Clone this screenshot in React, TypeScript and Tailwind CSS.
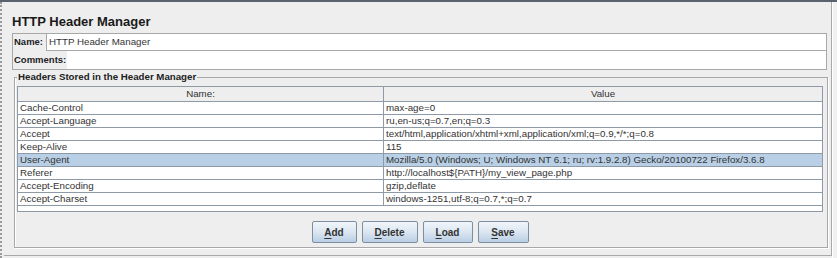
/**
 * JMeter-style HTTP Header Manager panel.
 */

const headers: [string, string][] = [
  ['Cache-Control', 'max-age=0'],
  ['Accept-Language', 'ru,en-us;q=0.7,en;q=0.3'],
  ['Accept', 'text/html,application/xhtml+xml,application/xml;q=0.9,*/*;q=0.8'],
  ['Keep-Alive', '115'],
  ['User-Agent', 'Mozilla/5.0 (Windows; U; Windows NT 6.1; ru; rv:1.9.2.8) Gecko/20100722 Firefox/3.6.8'],
  ['Referer', 'http://localhost${PATH}/my_view_page.php'],
  ['Accept-Encoding', 'gzip,deflate'],
  ['Accept-Charset', 'windows-1251,utf-8;q=0.7,*;q=0.7'],
];

const SELECTED = 4;

function ActionButton({ label, width }: { label: string; width: string }): React.ReactElement {
  return (
    <button
      type="button"
      className={`h-[22px] ${width} rounded-[2px] border border-[#7d8fa3] bg-linear-to-b from-[#f1f5fa] via-[#dbe6f1] to-[#b9cee4] text-[10px] font-bold text-[#333]`}
    >
      <span className="underline underline-offset-[2px]">{label[0]}</span>
      {label.slice(1)}
    </button>
  );
}

export default function App(): React.ReactElement {
  return (
    <div className="flex h-[258px] w-[837px] overflow-hidden border-t-2 border-[#59626d] bg-[#eeeeee] font-['Liberation_Sans',Arial,sans-serif] text-[#333]">
      <div className="w-[4px] border-l-2 border-dotted border-[#9a9a9a]" />

      <div className="flex h-[254px] w-[828px] flex-col border-r border-b border-[#a9a9a9] pl-[8px]">
        <h1 className="mt-[12px] h-[16px] text-[13px] leading-[16px] font-bold text-[#1a1a1a]">
          HTTP Header Manager
        </h1>

        {/* name / comments */}
        <div className="mt-[3px] flex w-[815px] flex-col border border-[#a8a8a8] bg-[#eeeeee]">
          <div className="flex h-[17px] items-center">
            <span className="w-[33px] pl-[1px] text-[9.5px] font-bold text-[#222]">Name:</span>
            <div className="flex h-full flex-1 items-center border-b border-l border-[#a8a8a8] bg-white pl-[2px] text-[9.75px] text-[#333]">
              HTTP Header Manager
            </div>
          </div>
          <div className="flex h-[18px] items-center">
            <span className="w-[54px] pl-[1px] text-[9.5px] font-bold text-[#222]">Comments:</span>
            <div className="h-full flex-1 bg-white" />
          </div>
        </div>

        {/* headers group */}
        <fieldset className="mt-[1px] ml-[2px] w-[814px] border border-[#a8a8a8] pr-[4px] pb-[4px] pl-[2px] pt-[3px] shadow-[inset_1px_0_0_#fff,1px_1px_0_#fff]">
          <legend className="h-[12px] bg-[#eeeeee] px-[1px] text-[9.7px] leading-[12px] font-bold text-[#222]">
            Headers Stored in the Header Manager
          </legend>

          <div className="flex h-[126px] flex-col border border-[#8e9aa6] bg-white text-[9.75px] text-[#333]">
            <div className="flex h-[15px] border-b border-[#8e9aa6] bg-[#eeeeee] leading-[14px]">
              <div className="w-[366px] border-r border-[#8e9aa6] text-center">Name:</div>
              <div className="flex-1 text-center">Value</div>
            </div>
            {headers.map(([name, value], i) => (
              <div
                key={name}
                className={`flex h-[13px] border-b border-[#8e9aa6] leading-[12px] ${i === SELECTED ? 'bg-[#b8cfe5]' : 'bg-white'}`}
              >
                <div className="w-[366px] truncate border-r border-[#8e9aa6] pl-[2px]">{name}</div>
                <div className="flex-1 truncate pl-[2px]">{value}</div>
              </div>
            ))}
          </div>

          <div className="mt-[9px] flex justify-center gap-[5px]">
            <ActionButton label="Add" width="w-[45px]" />
            <ActionButton label="Delete" width="w-[56px]" />
            <ActionButton label="Load" width="w-[50px]" />
            <ActionButton label="Save" width="w-[51px]" />
          </div>
        </fieldset>
      </div>

      <div className="flex-1 border-l border-white bg-[#f1f1f1]" />
    </div>
  );
}
